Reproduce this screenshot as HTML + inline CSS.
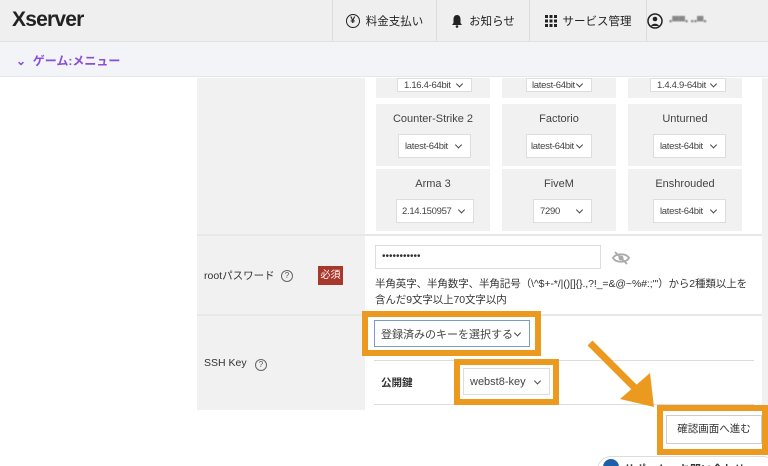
<!DOCTYPE html>
<html><head><meta charset="utf-8"><style>
*{box-sizing:border-box;margin:0;padding:0}
html,body{width:768px;height:466px;overflow:hidden}
body{background:#fff;font-family:"Liberation Sans","Noto Sans CJK JP",sans-serif;color:#333;position:relative}
.a{position:absolute}
.hdr{left:0;top:0;width:768px;height:42px;background:#efefef;border-bottom:1px solid #e2e2e2}
.nav{left:0;top:42px;width:768px;height:35px;background:#f2f4f7;border-bottom:1px solid #e4e6ea}
.hi{top:0;height:42px;border-left:1px solid #ddd;font-size:11.5px;display:flex;align-items:center;justify-content:center;gap:6px;color:#222}
.sel{background:#fff;border:1px solid #ddd;font-size:9.5px;letter-spacing:-0.3px;color:#444;display:flex;align-items:center;padding-left:6px;white-space:nowrap;overflow:hidden}
.sel:after{content:"";position:absolute;right:9px;top:50%;width:4px;height:4px;border-right:1.3px solid #444;border-bottom:1.3px solid #444;transform:translateY(-70%) rotate(45deg)}
.cell{background:#f1f1f1;text-align:center;font-size:11px;color:#444}
.q{width:12px;height:12px;border:1px solid #666;border-radius:50%;font-size:8px;text-align:center;line-height:10px;color:#555}
.ob{border:6px solid #ec9a1f}
</style></head><body>
<div class="a hdr"></div>
<div class="a" style="left:12px;top:8px;font-size:21px;font-weight:bold;color:#222;letter-spacing:-0.8px">Xserver</div>
<div class="a hi" style="left:332px;width:104px">
<span style="width:14px;height:14px;border:1.5px solid #222;border-radius:50%;font-size:9px;line-height:11px;text-align:center;font-weight:bold">¥</span>料金支払い</div>
<div class="a hi" style="left:436px;width:93px"><svg width="12" height="14" viewBox="0 0 12 14"><path d="M6 1C3.5 1 2.5 3 2.5 5.5V9L1 11H11L9.5 9V5.5C9.5 3 8.5 1 6 1Z" fill="#222"/><circle cx="6" cy="12.5" r="1.3" fill="#222"/></svg>お知らせ</div>
<div class="a hi" style="left:529px;width:117px"><svg width="12" height="12"><g fill="#222"><rect x="0" y="0" width="3" height="3"/><rect x="4.5" y="0" width="3" height="3"/><rect x="9" y="0" width="3" height="3"/><rect x="0" y="4.5" width="3" height="3"/><rect x="4.5" y="4.5" width="3" height="3"/><rect x="9" y="4.5" width="3" height="3"/><rect x="0" y="9" width="3" height="3"/><rect x="4.5" y="9" width="3" height="3"/><rect x="9" y="9" width="3" height="3"/></g></svg>サービス管理</div>
<div class="a hi" style="left:646px;width:122px;justify-content:flex-start;padding-left:0"><svg width="16" height="16"><circle cx="8" cy="8" r="7" fill="none" stroke="#222" stroke-width="1.5"/><circle cx="8" cy="6" r="2.3" fill="#222"/><path d="M4 13C5 10 11 10 12 13" fill="#222"/></svg><span style="color:#888;font-size:9px;filter:blur(0.6px)">▪▀▀▪ ▪▪▀▪</span></div>
<div class="a nav"></div>
<div class="a" style="left:16px;top:52px;font-size:12px;font-weight:bold;color:#8a4fd8">⌄&nbsp;&nbsp;ゲーム:メニュー</div>

<div class="a" style="left:197px;top:78px;width:168px;height:332px;background:#f1f1f1"></div>
<div class="a" style="left:197px;top:234px;width:571px;height:2px;background:#e8e8e8"></div>
<div class="a" style="left:197px;top:314px;width:571px;height:2px;background:#e8e8e8"></div>
<div class="a" style="left:762px;top:78px;width:6px;height:334px;background:#f1f1f1"></div>

<div class="a cell" style="left:376px;top:78px;width:114px;height:20px"></div>
<div class="a cell" style="left:502px;top:78px;width:114px;height:20px"></div>
<div class="a cell" style="left:628px;top:78px;width:114px;height:20px"></div>
<div class="a sel" style="left:397px;top:78px;width:75px;height:14px">1.16.4-64bit</div>
<div class="a sel" style="left:526px;top:78px;width:66px;height:14px;padding-left:5px">latest-64bit</div>
<div class="a sel" style="left:650px;top:78px;width:76px;height:14px">1.4.4.9-64bit</div>

<div class="a cell" style="left:376px;top:104px;width:114px;height:62px;padding-top:9px">Counter-Strike 2</div>
<div class="a cell" style="left:502px;top:104px;width:114px;height:62px;padding-top:9px">Factorio</div>
<div class="a cell" style="left:628px;top:104px;width:114px;height:62px;padding-top:9px">Unturned</div>
<div class="a sel" style="left:398px;top:134px;width:73px;height:24px">latest-64bit</div>
<div class="a sel" style="left:526px;top:134px;width:66px;height:24px;padding-left:4px">latest-64bit</div>
<div class="a sel" style="left:653px;top:134px;width:73px;height:24px">latest-64bit</div>

<div class="a cell" style="left:376px;top:169px;width:114px;height:62px;padding-top:9px">Arma 3</div>
<div class="a cell" style="left:502px;top:169px;width:114px;height:62px;padding-top:9px">FiveM</div>
<div class="a cell" style="left:628px;top:169px;width:114px;height:62px;padding-top:9px">Enshrouded</div>
<div class="a sel" style="left:396px;top:199px;width:78px;height:24px;padding-left:5px">2.14.150957</div>
<div class="a sel" style="left:533px;top:199px;width:59px;height:24px">7290</div>
<div class="a sel" style="left:653px;top:199px;width:73px;height:24px">latest-64bit</div>

<div class="a" style="left:204px;top:268px;font-size:10.5px">rootパスワード</div>
<div class="a q" style="left:281px;top:270px">?</div>
<div class="a" style="left:318px;top:266px;width:25px;height:19px;background:#a8372c;color:#fff;font-size:10px;text-align:center;line-height:19px">必須</div>
<div class="a" style="left:375px;top:245px;width:226px;height:24px;border:1px solid #ddd;font-size:10px;padding:5px 6px">•••••••••••</div>
<svg class="a" style="left:611px;top:250px" width="20" height="16"><path d="M2 8C5 3 15 3 18 8C15 13 5 13 2 8Z" fill="none" stroke="#aaa" stroke-width="1.8"/><circle cx="10" cy="8" r="2.5" fill="#aaa"/><line x1="4" y1="2" x2="16" y2="14" stroke="#aaa" stroke-width="1.8"/></svg>
<div class="a" style="left:375px;top:276px;width:395px;font-size:10.5px;line-height:16px;color:#333;letter-spacing:-0.1px">半角英字、半角数字、半角記号（\^$+-*/|()[]{}.,?!_=&amp;@~%#:;'"）から2種類以上を<br>含んだ9文字以上70文字以内</div>

<div class="a" style="left:204px;top:357px;font-size:10.5px">SSH Key</div>
<div class="a q" style="left:255px;top:359px">?</div>
<div class="a ob" style="left:362px;top:311px;width:179px;height:45px"></div>
<div class="a sel" style="left:374px;top:320px;width:156px;height:27px;border-color:#7a9bd0;font-size:11px;letter-spacing:0;padding-left:6px">登録済みのキーを選択する</div>
<div class="a" style="left:374px;top:360px;width:380px;height:1px;background:#ddd"></div>
<div class="a" style="left:374px;top:404px;width:380px;height:1px;background:#ddd"></div>
<div class="a" style="left:381px;top:375px;font-size:10.5px;font-weight:bold">公開鍵</div>
<div class="a ob" style="left:454px;top:359px;width:105px;height:46px"></div>
<div class="a sel" style="left:463px;top:368px;width:87px;height:27px;font-size:11px;letter-spacing:0">webst8-key</div>

<svg class="a" style="left:580px;top:335px" width="90" height="80"><line x1="10" y1="8" x2="58" y2="56" stroke="#ec9a1f" stroke-width="7"/><polygon points="40,64 74,72 70,38" fill="#ec9a1f"/></svg>
<div class="a ob" style="left:657px;top:405px;width:111px;height:50px"></div>
<div class="a" style="left:666px;top:415px;width:96px;height:29px;background:#fff;border:1px solid #ccc;font-size:10.5px;text-align:center;line-height:27px">確認画面へ進む</div>
<div class="a" style="left:597px;top:456px;width:180px;height:30px;border:1px solid #ddd;border-radius:14px;background:#fff;font-size:11px;font-weight:bold;padding:4px 0 0 26px">サポート・お問い合わせ</div>
<div class="a" style="left:603px;top:459px;width:16px;height:16px;border-radius:50%;background:#1e5fa8"></div>
</body></html>
